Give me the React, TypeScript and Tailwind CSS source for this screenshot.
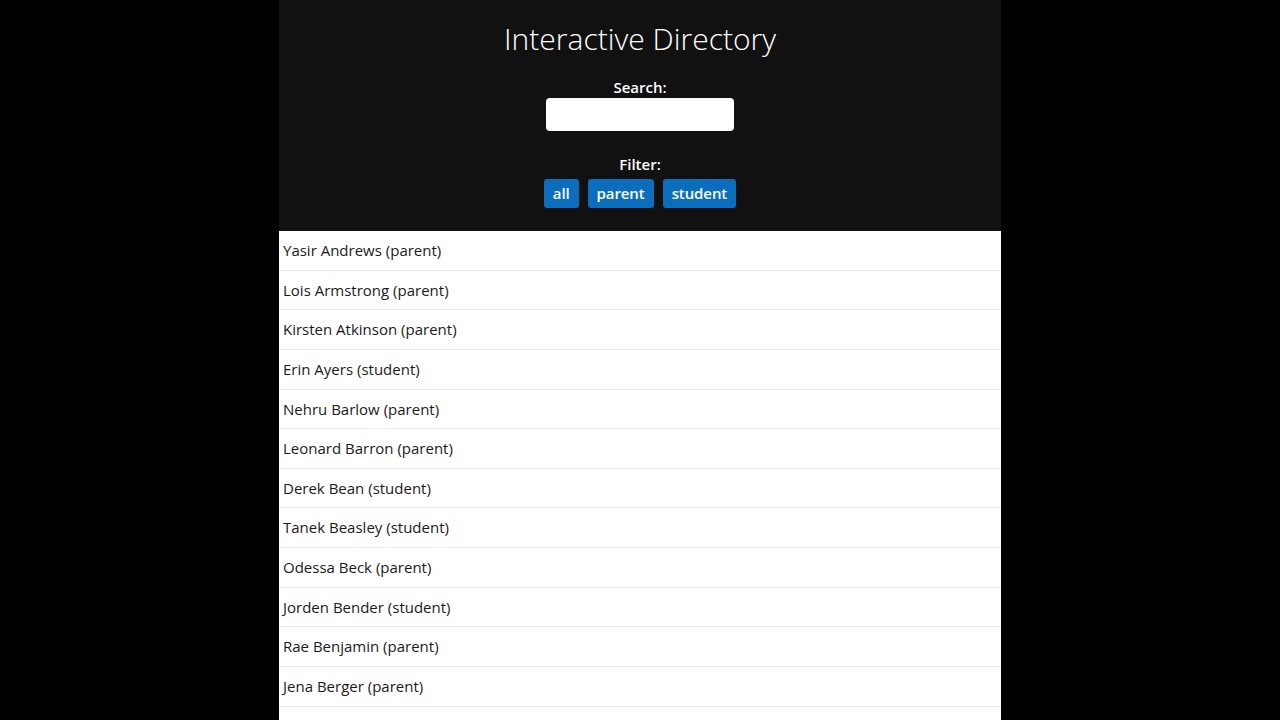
const people: [string, string][] = [
  ['Yasir Andrews', 'parent'],
  ['Lois Armstrong', 'parent'],
  ['Kirsten Atkinson', 'parent'],
  ['Erin Ayers', 'student'],
  ['Nehru Barlow', 'parent'],
  ['Leonard Barron', 'parent'],
  ['Derek Bean', 'student'],
  ['Tanek Beasley', 'student'],
  ['Odessa Beck', 'parent'],
  ['Jorden Bender', 'student'],
  ['Rae Benjamin', 'parent'],
  ['Jena Berger', 'parent'],
  ['Rahim Bernard', 'student'],
];

export default function App() {
  return (
    <div className="h-[720px] overflow-hidden bg-black font-['Open_Sans',sans-serif]">
      <div className="mx-auto w-[722px]">
        {/* Header */}
        <div className="flex h-[231px] flex-col items-center bg-[#111111] text-white">
          <h1 className="mt-[19px] text-[30px] font-light leading-[40px]">Interactive Directory</h1>
          <label className="mt-[19px] text-[15px] font-semibold leading-[18px]">Search:</label>
          <input
            type="text"
            className="mt-[2px] h-[33px] w-[188px] rounded-[4px] bg-white px-2 text-black outline-none"
          />
          <div className="mt-[24px] text-[15px] font-semibold leading-[18px]">Filter:</div>
          <div className="mt-[6px] flex gap-[9px]">
            {['all', 'parent', 'student'].map((f) => (
              <button
                key={f}
                className="h-[29px] rounded-[3px] bg-[#0a6ebd] px-[9px] text-[15px] font-semibold leading-[29px] tracking-[-0.1px] text-white"
              >
                {f}
              </button>
            ))}
          </div>
        </div>

        {/* List */}
        <ul className="bg-white">
          {people.map(([name, role], i) => (
            <li
              key={i}
              className="flex h-[39.64px] items-center border-b border-[#ececec] px-[4px] text-[15px] text-[#1a1a1a]"
            >
              {name} ({role})
            </li>
          ))}
        </ul>
      </div>
    </div>
  );
}
